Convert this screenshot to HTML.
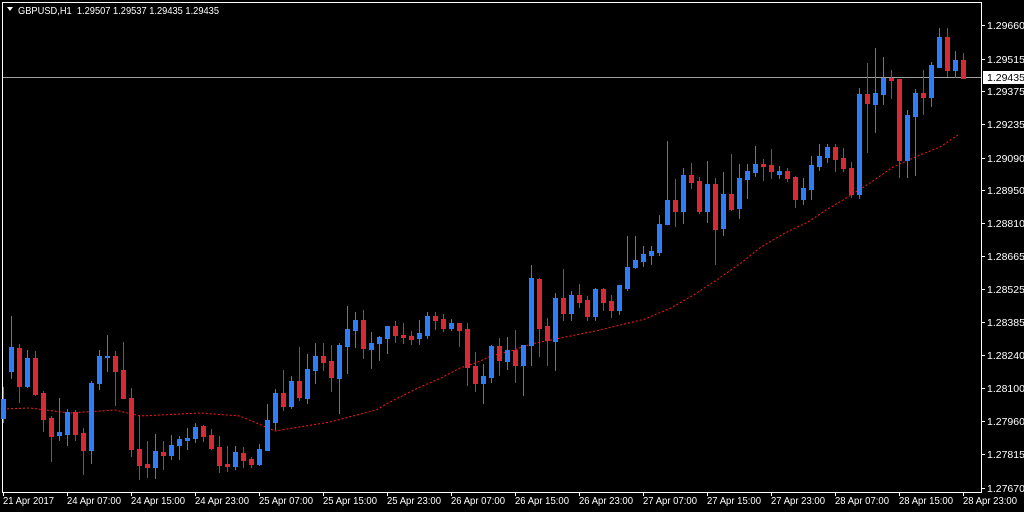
<!DOCTYPE html>
<html><head><meta charset="utf-8"><style>
html,body{margin:0;padding:0;background:#000;width:1024px;height:512px;overflow:hidden}
svg{display:block}
text{font-family:"Liberation Sans",sans-serif;font-size:10.5px;fill:#fff;white-space:pre}
</style></head><body>
<svg id="s" width="1024" height="512" xmlns="http://www.w3.org/2000/svg"></svg>
<script>
var d=[[1,399,418,387,422],[1,347,371,316,378],[0,348,386,344,402],[1,358,386,350,387],[0,358,394,351,395],[0,393,419,391,431],[0,418,436,416,461],[1,432,435,398,440],[1,412,434,409,445],[0,412,434,410,440],
[0,433,450,428,474],[1,383,450,381,463],[1,356,383,350,389],[1,356,357,335,371],[0,356,371,351,405],[0,370,398,342,398],[0,398,449,388,456],[0,449,465,415,479],[0,464,467,441,477],[1,451,467,434,478],
[0,452,455,441,469],[1,445,455,435,459],[1,439,445,436,459],[1,438,440,428,449],[1,427,438,423,442],[0,426,436,425,441],[0,435,448,429,449],[0,447,465,436,472],[0,464,466,446,471],[1,452,466,446,469],
[0,453,460,447,467],[0,459,464,457,467],[1,449,464,444,465],[1,420,450,404,450],[1,393,422,389,429],[0,393,406,370,410],[1,381,406,376,408],[0,381,397,347,400],[1,369,398,354,403],[1,356,370,343,383],
[0,356,362,343,370],[0,361,377,345,391],[1,345,378,343,413],[1,329,346,306,373],[1,320,330,312,347],[0,320,348,310,358],[1,343,349,332,368],[1,337,343,336,360],[1,326,338,326,353],[0,326,335,321,342],
[0,335,337,323,343],[0,336,339,331,344],[1,333,338,320,344],[1,316,335,312,338],[0,316,320,312,329],[0,319,328,314,331],[1,323,328,319,330],[0,323,330,323,346],[0,329,367,323,385],[0,366,383,352,391],
[1,376,383,364,403],[1,346,377,345,382],[0,346,360,338,375],[1,350,361,337,369],[0,350,365,330,382],[1,345,365,345,395],[1,278,345,265,365],[0,279,328,278,356],[0,326,340,318,365],[1,298,341,293,370],
[0,298,313,269,320],[1,295,313,291,320],[0,295,302,284,307],[0,300,316,296,320],[1,289,316,288,320],[0,289,302,288,310],[0,301,310,295,317],[1,285,310,285,314],[1,267,288,236,290],[1,260,267,236,268],
[1,254,261,246,266],[1,251,255,246,264],[1,224,252,215,255],[1,200,224,141,224],[0,200,211,179,226],[1,175,211,168,223],[0,175,182,163,188],[0,181,211,177,213],[1,184,211,161,222],[0,184,229,178,264],
[1,194,228,172,235],[0,194,209,154,210],[1,178,208,164,218],[1,171,179,164,198],[1,164,172,146,176],[0,164,166,159,180],[0,165,171,149,178],[1,171,174,166,178],[0,171,178,168,181],[0,177,199,176,207],
[1,188,199,178,204],[1,165,189,156,199],[1,156,166,144,170],[1,147,157,144,162],[0,147,159,144,171],[0,158,168,148,171],[0,168,194,162,197],[1,94,194,88,198],[0,94,103,63,152],[1,93,104,48,132],
[1,78,94,57,104],[0,78,80,70,98],[0,79,160,79,177],[1,115,160,110,177],[1,93,116,89,175],[0,93,97,70,114],[1,65,97,62,106],[1,37,67,28,67],[0,37,70,28,76],[1,60,70,51,77],[0,60,78,53,78]];
var h='';
h+='<line x1="2.5" y1="2" x2="2.5" y2="492.5" stroke="#fff"/>';
h+='<line x1="2" y1="2.5" x2="981.5" y2="2.5" stroke="#fff"/>';
h+='<line x1="981.5" y1="2" x2="981.5" y2="492.5" stroke="#fff"/>';
h+='<line x1="2" y1="492.5" x2="982" y2="492.5" stroke="#fff"/>';
h+='<line x1="3" y1="77.5" x2="981" y2="77.5" stroke="#a0a0a0"/>';
var ma=[[3,409],[30,408],[70,413],[115,410],[140,416],[200,413],[240,416],[275,431],[330,422],[376,410],[388,403],[418,388],[441,378],[460,368],[478,362],[491,356],[511,351],[531,344],[556,339],[600,330],[645,319],[671,308],[695,294],[718,279],[741,263],[761,247],[785,233],[808,222],[826,210],[843,200],[870,183],[893,167],[920,155],[940,147],[958,135]];
h+='<polyline fill="none" stroke="#ff1a1a" stroke-width="1" stroke-dasharray="2,2" points="'+ma.map(function(p){return p.join(',')}).join(' ')+'"/>';
for(var i=0;i<d.length;i++){var c=d[i],x=3+8*i,col=c[0]?'#2f7ef8':'#d82a36';
h+='<rect x="'+x+'" y="'+c[3]+'" width="1" height="'+(c[4]-c[3]+1)+'" fill="'+col+'"/>';
h+='<rect x="'+(x-2)+'" y="'+c[1]+'" width="5" height="'+(c[2]-c[1]+1)+'" fill="'+col+'"/>';}
var pr=['1.29660','1.29515','1.29375','1.29235','1.29090','1.28950','1.28810','1.28665','1.28525','1.28385','1.28240','1.28100','1.27960','1.27815','1.27670'];
pr.forEach(function(p){var y=Math.round(25+(1.2966-parseFloat(p))*23266);
h+='<line x1="982" y1="'+(y+0.5)+'" x2="985" y2="'+(y+0.5)+'" stroke="#fff"/>';
h+='<text x="987" y="'+(y+4)+'">'+p+'</text>';});
h+='<rect x="983" y="71" width="41" height="13" fill="#fff"/><text x="987" y="81" style="fill:#000">1.29435</text>';
var t=['21 Apr 2017','24 Apr 07:00','24 Apr 15:00','24 Apr 23:00','25 Apr 07:00','25 Apr 15:00','25 Apr 23:00','26 Apr 07:00','26 Apr 15:00','26 Apr 23:00','27 Apr 07:00','27 Apr 15:00','27 Apr 23:00','28 Apr 07:00','28 Apr 15:00','28 Apr 23:00'];
t.forEach(function(s,k){var x=3+64*k;h+='<line x1="'+(x+0.5)+'" y1="493" x2="'+(x+0.5)+'" y2="496" stroke="#fff"/>';
h+='<text x="'+x+'" y="504" textLength="'+(k==0?51:54)+'" lengthAdjust="spacingAndGlyphs">'+s+'</text>';});
h+='<polygon points="7,7 13,7 10,11" fill="#fff"/>';
h+='<text x="18" y="14" textLength="201" lengthAdjust="spacingAndGlyphs">GBPUSD,H1  1.29507 1.29537 1.29435 1.29435</text>';
document.getElementById('s').innerHTML=h;
</script>
</body></html>
